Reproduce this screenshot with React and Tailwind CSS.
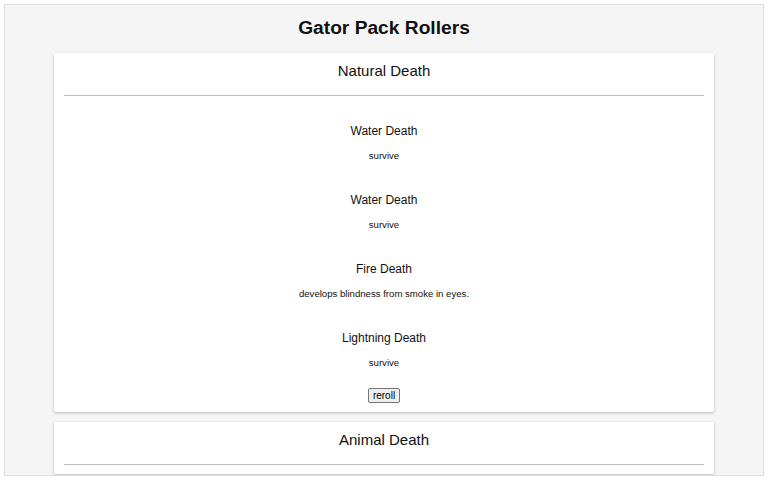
import React from 'react';

const naturalDeaths = [
  { name: 'Water Death', result: 'survive' },
  { name: 'Water Death', result: 'survive' },
  { name: 'Fire Death', result: 'develops blindness from smoke in eyes.' },
  { name: 'Lightning Death', result: 'survive' },
];

function DeathCard({ title, items, showReroll }) {
  return (
    <div className="bg-white rounded-[2px] shadow-[0_1px_3px_rgba(0,0,0,0.25)] px-[10px] pt-[9px] pb-[9px]">
      <h2 className="text-center text-[15px] leading-[18px] text-[#111]">{title}</h2>
      <hr className="mt-[15px] border-0 border-t border-[#bdbdbd]" />
      {items && (
        <div className="flex flex-col items-center pt-[28px]">
          {items.map((item, i) => (
            <div key={i} className="flex flex-col items-center mb-[31px]">
              <h3 className="text-[12px] leading-[15px] text-[#111]">{item.name}</h3>
              <p className="mt-[11px] text-[9.6px] leading-[12px] text-[#111]">{item.result}</p>
            </div>
          ))}
        </div>
      )}
      {showReroll && (
        <div className="flex justify-center -mt-[12px]">
          <button className="text-[10px] leading-[11px] px-[4px] py-[1px] bg-[#efefef] border border-[#767676] rounded-[2px] text-black">
            reroll
          </button>
        </div>
      )}
    </div>
  );
}

export default function App() {
  return (
    <div className="bg-white w-[768px] h-[480px] p-1" style={{ fontFamily: '"Liberation Sans", Arial, sans-serif' }}>
      <div className="h-[472px] overflow-hidden border border-[#dedede] bg-[#f5f5f5] px-[49px]">
        <h1 className="text-center text-[19.2px] leading-[24px] font-bold text-[#111] mt-[11px] mb-[13px]">Gator Pack Rollers</h1>
        <div className="flex flex-col gap-[10px]">
          <DeathCard title="Natural Death" items={naturalDeaths} showReroll />
          <DeathCard title="Animal Death" />
        </div>
      </div>
    </div>
  );
}
